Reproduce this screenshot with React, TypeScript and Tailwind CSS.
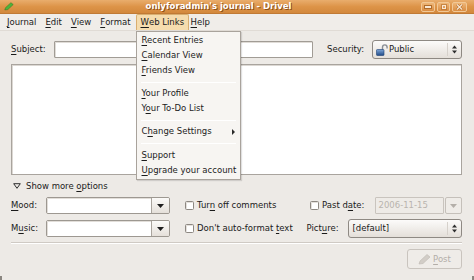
import React from "react";

const U = ({ c }: { c: string }) => (
  <span className="underline underline-offset-[1.5px] decoration-[1px]">{c}</span>
);

const UpDown = ({ color = "#2e2e2e" }: { color?: string }) => (
  <svg width="5" height="9" viewBox="0 0 5 9">
    <polygon points="2.5,0.5 5,3.5 0,3.5" fill={color} />
    <polygon points="0,5.5 5,5.5 2.5,8.5" fill={color} />
  </svg>
);

const Down = ({ color = "#1e1e1e" }: { color?: string }) => (
  <svg width="7" height="4" viewBox="0 0 7 4">
    <polygon points="0,0 7,0 3.5,4" fill={color} />
  </svg>
);

const Lock = () => (
  <svg width="12" height="12" viewBox="0 0 12 12">
    <defs>
      <linearGradient id="lk" x1="0" y1="0" x2="0" y2="1">
        <stop offset="0" stopColor="#7ea6d8" />
        <stop offset="1" stopColor="#204a87" />
      </linearGradient>
    </defs>
    <path d="M6.5 6 V3.2 a2.3 2.3 0 0 1 4.6 0 V4.5" fill="none" stroke="#8a8f96" strokeWidth="1.4" />
    <rect x="0.5" y="5.5" width="7.5" height="6" rx="0.8" fill="url(#lk)" stroke="#1d3f73" strokeWidth="0.6" />
  </svg>
);

const Pencil = ({ fill, stroke }: { fill: string; stroke: string }) => (
  <svg width="13" height="11" viewBox="0 0 13 11">
    <polygon points="1,10 2,7 9,0.5 12,3 5,9.5" fill={fill} stroke={stroke} strokeWidth="0.6" />
  </svg>
);

const Check = ({ children, w }: { children: React.ReactNode; w: string }) => (
  <div className={`flex items-center shrink-0 whitespace-nowrap ${w}`}>
    <div className="w-[9px] h-[9px] border border-[#8d8882] rounded-[1.5px] bg-white shadow-[inset_1px_1px_0_#e4e0db]" />
    <span className="ml-[3px]">{children}</span>
  </div>
);

const ComboEntry = () => (
  <div className="w-[124px] h-[17px] flex border border-[#9d9891] rounded-[2px] overflow-hidden shrink-0">
    <div className="flex-1 bg-white shadow-[inset_1px_1px_0_#e2ded9]" />
    <div className="w-[18px] border-l border-[#a9a49d] bg-gradient-to-b from-[#fbfaf8] to-[#e5e0da] flex items-center justify-center">
      <Down />
    </div>
  </div>
);

const Sep = () => (
  <div className="h-[8px] flex items-center px-[4px]">
    <div className="w-full h-[1px] bg-[#d9d5cf] border-b border-white" />
  </div>
);

const MItem = ({ children, arrow }: { children: React.ReactNode; arrow?: boolean }) => (
  <div className="h-[15px] flex items-center pl-[4.5px] pr-[4px] text-[#1c1c1c] whitespace-nowrap">
    <span className="flex-1">{children}</span>
    {arrow && (
      <svg width="3" height="6" viewBox="0 0 3 6" className="mr-[1px]">
        <polygon points="0,0 3,3 0,6" fill="#2a2a2a" />
      </svg>
    )}
  </div>
);

export default function App() {
  return (
    <div className="relative w-[474px] h-[280px] overflow-hidden bg-[#edeae6] text-[8.5px] leading-none text-[#1a1a1a] font-['DejaVu_Sans',sans-serif]">
      {/* Title bar */}
      <div className="h-[14px] flex items-center bg-gradient-to-b from-[#e9ad6c] via-[#dd9448] to-[#d3883c] border-b border-[#c07a35]">
        <div className="w-[14px] pl-[4px] flex items-center">
          <Pencil fill="#4cb33a" stroke="#2b6e1f" />
        </div>
        <div className="flex-1 text-center font-bold text-white [text-shadow:1px_1px_0_#8e4e17] pl-[2px] whitespace-nowrap">
          onlyforadmin&apos;s journal - Drivel
        </div>
        <div className="flex items-center gap-[2px] pr-[7px]">
          <div className="w-[14px] h-[10px] rounded-[2px] border border-[#f1c896] bg-gradient-to-b from-[#eeb677] to-[#d98d42] flex items-end justify-center pb-[2px]">
            <div className="w-[6px] h-[2px] bg-[#f8e7d3] border border-[#b06c2a] box-content" />
          </div>
          <div className="w-[13px] h-[10px] rounded-[2px] border border-[#f1c896] bg-gradient-to-b from-[#eeb677] to-[#d98d42] flex items-center justify-center">
            <div className="w-[4px] h-[4px] border-[1.5px] border-[#f8e7d3] outline outline-1 outline-[#b06c2a]/60" />
          </div>
          <div className="w-[15px] h-[10px] rounded-[2px] border border-[#f1c896] bg-gradient-to-b from-[#eeb677] to-[#d98d42] flex items-center justify-center">
            <svg width="7" height="6" viewBox="0 0 7 6">
              <path d="M1 0.5 L6 5.5 M6 0.5 L1 5.5" stroke="#b06c2a" strokeWidth="2.4" />
              <path d="M1 0.5 L6 5.5 M6 0.5 L1 5.5" stroke="#f8e7d3" strokeWidth="1.3" />
            </svg>
          </div>
        </div>
      </div>

      {/* Menu bar */}
      <div className="h-[17px] flex items-stretch pl-[2.5px] bg-[#f0ede9] border-b border-[#e0dbd5] whitespace-nowrap">
        <div className="px-[4.5px] flex items-center"><U c="J" />ournal</div>
        <div className="px-[4.5px] flex items-center"><U c="E" />dit</div>
        <div className="px-[4.5px] flex items-center"><U c="V" />iew</div>
        <div className="px-[4.5px] flex items-center"><U c="F" />ormat</div>
        <div className="px-[3.5px] ml-[1px] flex items-center bg-[#f5dcae] border border-b-0 border-[#d9ae70] rounded-t-[2px]"><U c="W" />eb Links</div>
        <div className="px-[2px] flex items-center"><U c="H" />elp</div>
      </div>

      {/* Content */}
      <div className="pl-[11px] pr-[12px] pt-[9px] flex flex-col">
        {/* Subject row */}
        <div className="h-[19px] flex items-center">
          <div className="w-[43px]"><U c="S" />ubject:</div>
          <div className="w-[259px] h-[17px] bg-white border border-[#a19c95] rounded-[1px] shadow-[inset_1px_1px_0_#e0dcd7]" />
          <div className="ml-[14px] w-[45px]">Security:</div>
          <div className="flex-1 h-[19px] flex items-center border border-[#8e8983] rounded-[3px] bg-gradient-to-b from-[#fcfbfa] to-[#e4dfd9]">
            <div className="ml-[3px]"><Lock /></div>
            <span className="ml-[1px] flex-1">Public</span>
            <div className="w-[1px] h-[13px] bg-[#d6d1cb] mr-[4px]" />
            <div className="mr-[4px] flex items-center"><UpDown /></div>
          </div>
        </div>

        {/* Text area */}
        <div className="mt-[5px] h-[111px] bg-white border border-[#a9a49e] shadow-[inset_1px_1px_0_#dcd8d3]" />

        {/* Show more options */}
        <div className="mt-[4px] h-[14px] flex items-center pl-[2px]">
          <svg width="8" height="6" viewBox="0 0 8 6">
            <polygon points="0.7,0.7 7.3,0.7 4,5.3" fill="none" stroke="#2e2e2e" strokeWidth="1" />
          </svg>
          <span className="ml-[5px]">Show more <U c="o" />ptions</span>
        </div>

        {/* Mood row */}
        <div className="mt-[4px] h-[17px] flex items-center">
          <div className="w-[35px]"><U c="M" />ood:</div>
          <ComboEntry />
          <div className="ml-[15px]" />
          <Check w="w-[125px]">Tur<U c="n" /> off comments</Check>
          <Check w="w-[64.5px]">Past d<U c="a" />te:</Check>
          <div className="w-[69px] h-[17px] border border-[#c9c4be] rounded-[1px] bg-[#eeebe7] flex items-center pl-[3px] text-[#b9b4ae]">
            2006-11-15
          </div>
          <div className="ml-[1.5px] flex-1 h-[17px] border border-[#c5c0ba] rounded-[2px] bg-[#efece8] flex items-center justify-center">
            <Down color="#b4afa9" />
          </div>
        </div>

        {/* Music row */}
        <div className="mt-[5px] h-[19px] flex items-center">
          <div className="w-[35px]">M<U c="u" />sic:</div>
          <ComboEntry />
          <div className="ml-[15px]" />
          <Check w="w-[121.5px]">Don&apos;t auto-format <U c="t" />ext</Check>
          <div className="w-[41px]">Pict<U c="u" />re:</div>
          <div className="flex-1 h-[19px] flex items-center border border-[#8e8983] rounded-[3px] bg-gradient-to-b from-[#fcfbfa] to-[#e4dfd9]">
            <span className="ml-[4px] flex-1">[default]</span>
            <div className="w-[1px] h-[13px] bg-[#d6d1cb] mr-[4px]" />
            <div className="mr-[4px] flex items-center"><UpDown /></div>
          </div>
        </div>

        {/* Separator */}
        <div className="mt-[4px] h-[1px] bg-[#cfcac4]" />
        <div className="h-[1px] bg-white" />

        {/* Post */}
        <div className="mt-[5px] h-[20px] flex justify-end">
          <div className="w-[55px] h-[20px] border border-[#c9c4be] rounded-[3px] bg-[#efece8] flex items-center justify-center text-[#b3aea8]">
            <Pencil fill="#d2cdc7" stroke="#bdb8b2" />
            <span className="ml-[2px]"><U c="P" />ost</span>
          </div>
        </div>
      </div>

      {/* Dropdown menu (overlay) */}
      <div className="absolute left-[136px] top-[31px] w-[105px] bg-[#f7f5f2] border border-[#a9a39c] py-[1px] shadow-[1px_1px_1px_rgba(0,0,0,0.12)]">
        <MItem><U c="R" />ecent Entries</MItem>
        <MItem><U c="C" />alendar View</MItem>
        <MItem><U c="F" />riends View</MItem>
        <Sep />
        <MItem><U c="Y" />our Profile</MItem>
        <MItem>Y<U c="o" />ur To-Do List</MItem>
        <Sep />
        <MItem arrow>C<U c="h" />ange Settings</MItem>
        <div className="h-[9px] flex items-center px-[4px]">
          <div className="w-full h-[1px] bg-[#d9d5cf] border-b border-white" />
        </div>
        <MItem><U c="S" />upport</MItem>
        <MItem><U c="U" />pgrade your account</MItem>
      </div>

      {/* bottom window corners */}
      <div className="absolute left-0 bottom-0 w-[2px] h-[4px] bg-[#8a8680]" />
      <div className="absolute right-0 bottom-0 w-[2px] h-[4px] bg-[#8a8680]" />
    </div>
  );
}
